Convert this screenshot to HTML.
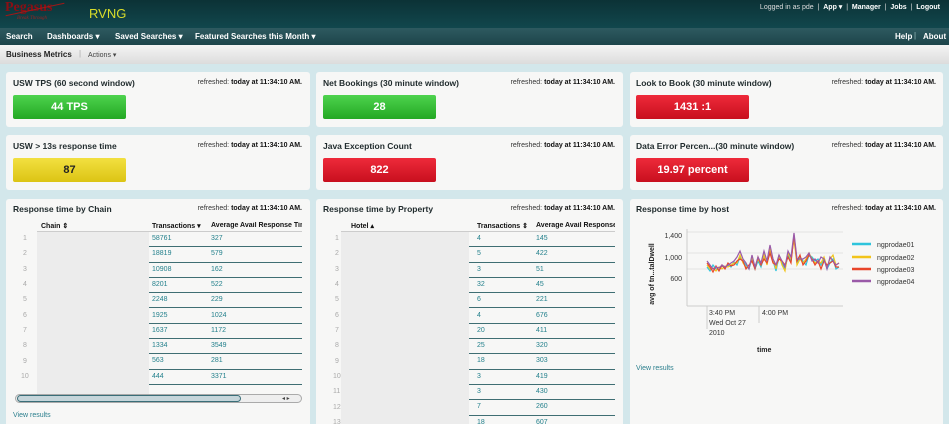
<!DOCTYPE html>
<html><head><meta charset="utf-8"><style>
*{margin:0;padding:0;box-sizing:border-box}
html,body{width:949px;height:424px;overflow:hidden}
body{background:#d3e7eb;font-family:"Liberation Sans",Arial,sans-serif;position:relative;color:#222}
.a{position:absolute}
.hdr{left:0;top:0;width:949px;height:28px;background:linear-gradient(#0c3236,#11474d)}
.nav{left:0;top:28px;width:949px;height:17px;background:linear-gradient(#2e5a60,#1c444a);color:#fff;font-size:8px;font-weight:bold;white-space:nowrap}
.sub{left:0;top:45px;width:949px;height:19px;background:linear-gradient(#f4f4f4,#dcdcdc)}
.p{position:absolute;background:#f7f7f6;border-radius:3px}
.t{position:absolute;font-size:8.5px;font-weight:bold;color:#1f2a2c;white-space:nowrap}
.r{position:absolute;font-size:7px;color:#333;text-align:right;white-space:nowrap}
.r b{color:#111}
.bd{position:absolute;width:113px;height:24px;border-radius:2px;color:#fff;font-weight:bold;font-size:11px;text-align:center;line-height:24px}
.g{background:linear-gradient(#4ed34e,#23a823);}
.rd{background:linear-gradient(#ee2a3a,#c80f1e)}
.y{background:linear-gradient(#f2e040,#dcc414);color:#222}
.tb{position:absolute;font-size:7px}
.h{position:absolute;font-weight:bold;color:#111;font-size:7px;white-space:nowrap}
.row{position:absolute;height:15.3px;border-bottom:1.5px solid #3f6e73;color:#23808c;line-height:14px;font-size:7px;white-space:nowrap}
.n{position:absolute;color:#aaa;font-size:7px}
.gray{position:absolute;background:#ececec}
.lk{position:absolute;color:#2b7f8d;font-size:7px}
</style></head><body>
<div class="a hdr"></div>
<div class="a" style="left:5px;top:0px;font-family:'Liberation Serif',serif;font-size:14px;font-weight:bold;color:#8a0f14;white-space:nowrap;line-height:16px">Pegasus</div>
<div class="a" style="left:5px;top:9px;width:60px;height:1px;background:#a01818;transform:rotate(-12deg)"></div>
<div class="a" style="left:17px;top:16px;font-family:'Liberation Serif',serif;font-size:5px;font-style:italic;color:#9a2222;white-space:nowrap">Break Through</div>
<div class="a" style="left:89px;top:6px;font-size:13px;color:#d9dd2a">RVNG</div>
<div class="a" style="right:9px;top:3px;font-size:7px;color:#ddd;white-space:nowrap">Logged in as pde &nbsp;| &nbsp;<b style="color:#fff">App ▾</b> &nbsp;| &nbsp;<b style="color:#fff">Manager</b> &nbsp;| &nbsp;<b style="color:#fff">Jobs</b> &nbsp;| &nbsp;<b style="color:#fff">Logout</b></div>
<div class="a nav"><span class="a" style="left:6px;top:4px">Search</span><span class="a" style="left:47px;top:4px">Dashboards ▾</span><span class="a" style="left:115px;top:4px">Saved Searches ▾</span><span class="a" style="left:195px;top:4px">Featured Searches this Month ▾</span><span class="a" style="left:895px;top:4px">Help</span><span class="a" style="left:914px;top:3px;font-weight:normal;color:#9bb">|</span><span class="a" style="left:923px;top:4px">About</span></div>
<div class="a sub"><span class="a" style="left:6px;top:5px;font-size:8px;font-weight:bold;white-space:nowrap">Business Metrics</span><span class="a" style="left:79px;top:4px;color:#aaa;font-size:8px">|</span><span class="a" style="left:88px;top:6px;font-size:7px;color:#444;white-space:nowrap">Actions ▾</span></div>

<div class="p" style="left:6px;top:72px;width:304px;height:55px"></div>
<div class="p" style="left:316px;top:72px;width:307px;height:55px"></div>
<div class="p" style="left:630px;top:72px;width:313px;height:55px"></div>
<div class="p" style="left:6px;top:135px;width:304px;height:55px"></div>
<div class="p" style="left:316px;top:135px;width:307px;height:55px"></div>
<div class="p" style="left:630px;top:135px;width:313px;height:55px"></div>
<div class="p" style="left:6px;top:199px;width:304px;height:230px"></div>
<div class="p" style="left:316px;top:199px;width:307px;height:230px"></div>
<div class="p" style="left:630px;top:199px;width:313px;height:230px"></div>

<div class="t" style="left:13px;top:78px">USW TPS (60 second window)</div>
<div class="t" style="left:323px;top:78px">Net Bookings (30 minute window)</div>
<div class="t" style="left:636px;top:78px">Look to Book (30 minute window)</div>
<div class="t" style="left:13px;top:141px">USW &gt; 13s response time</div>
<div class="t" style="left:323px;top:141px">Java Exception Count</div>
<div class="t" style="left:636px;top:141px">Data Error Percen...(30 minute window)</div>
<div class="t" style="left:13px;top:204px">Response time by Chain</div>
<div class="t" style="left:323px;top:204px">Response time by Property</div>
<div class="t" style="left:636px;top:204px">Response time by host</div>

<div class="r" style="left:150px;width:152px;top:79px">refreshed: <b>today at 11:34:10 AM.</b></div>
<div class="r" style="left:460px;width:155px;top:79px">refreshed: <b>today at 11:34:10 AM.</b></div>
<div class="r" style="left:780px;width:156px;top:79px">refreshed: <b>today at 11:34:10 AM.</b></div>
<div class="r" style="left:150px;width:152px;top:142px">refreshed: <b>today at 11:34:10 AM.</b></div>
<div class="r" style="left:460px;width:155px;top:142px">refreshed: <b>today at 11:34:10 AM.</b></div>
<div class="r" style="left:780px;width:156px;top:142px">refreshed: <b>today at 11:34:10 AM.</b></div>
<div class="r" style="left:150px;width:152px;top:205px">refreshed: <b>today at 11:34:10 AM.</b></div>
<div class="r" style="left:460px;width:155px;top:205px">refreshed: <b>today at 11:34:10 AM.</b></div>
<div class="r" style="left:780px;width:156px;top:205px">refreshed: <b>today at 11:34:10 AM.</b></div>

<div class="bd g" style="left:13px;top:95px">44 TPS</div>
<div class="bd g" style="left:323px;top:95px">28</div>
<div class="bd rd" style="left:636px;top:95px">1431 :1</div>
<div class="bd y" style="left:13px;top:158px">87</div>
<div class="bd rd" style="left:323px;top:158px">822</div>
<div class="bd rd" style="left:636px;top:158px">19.97 percent</div>

<span class="h" style="left:41px;top:222px">Chain ⇕</span>
<span class="h" style="left:152px;top:222px">Transactions ▾</span>
<span class="h" style="left:211px;top:222px;width:91px;overflow:hidden">Average Avail Response Time</span>
<div class="a" style="left:37px;top:231px;width:265px;border-top:1px solid #ccc"></div>
<div class="gray" style="left:37px;top:232px;width:112px;height:164px"></div>
<div class="a" style="left:15px;top:394px;width:287px;height:9px;border:1px solid #aaa;border-radius:5px;background:#eee"></div>
<div class="a" style="left:17px;top:395px;width:224px;height:7px;border:1.5px solid #3a6e78;border-radius:4px;background:#c5d5da"></div>
<div class="a" style="left:282px;top:395px;font-size:6px;color:#444;white-space:nowrap">◂ ▸</div>
<div class="lk" style="left:13px;top:412px">View results</div>

<span class="h" style="left:351px;top:222px">Hotel ▴</span>
<span class="h" style="left:477px;top:222px">Transactions ⇕</span>
<span class="h" style="left:536px;top:222px;width:79px;overflow:hidden">Average Avail Response</span>
<div class="a" style="left:341px;top:231px;width:274px;border-top:1px solid #ccc"></div>
<div class="gray" style="left:341px;top:232px;width:128px;height:200px"></div>

<svg class="a" style="left:630px;top:199px" width="313" height="225" font-family="Liberation Sans,sans-serif">
<g stroke="#ddd" stroke-width="0.7"><line x1="57" y1="33" x2="213" y2="33"/><line x1="57" y1="54" x2="213" y2="54"/><line x1="57" y1="70" x2="213" y2="70"/></g>
<line x1="57" y1="30" x2="57" y2="107" stroke="#ccc"/><line x1="57" y1="107" x2="213" y2="107" stroke="#ccc"/>
<line x1="77" y1="107" x2="77" y2="130" stroke="#ccc"/><line x1="129" y1="107" x2="129" y2="124" stroke="#ccc"/>
<g font-size="7" fill="#333" text-anchor="end"><text x="52" y="39">1,400</text><text x="52" y="61">1,000</text><text x="52" y="82">600</text></g>
<text transform="translate(24,75) rotate(-90)" font-size="7" font-weight="bold" text-anchor="middle" fill="#222">avg of tn...talDwell</text>
<g font-size="7" fill="#333"><text x="79" y="116">3:40 PM</text><text x="79" y="126">Wed Oct 27</text><text x="79" y="136">2010</text><text x="132" y="116">4:00 PM</text></g>
<text x="127" y="153" font-size="7" font-weight="bold" fill="#222">time</text>
<g fill="none" stroke-width="1.2">
<polyline stroke="#2ec4dc" points="77,68 80,72 83,66 86,70 89,71 92,67 95,69 98,66 101,68 104,63 107,66 110,58 113,62 116,66 119,70 122,60 125,70 128,62 131,68 134,58 137,64 140,52 143,62 146,72 149,58 152,64 155,70 158,56 161,62 164,37 167,64 170,58 173,62 176,66 179,56 182,58 185,62 188,60 191,66 194,60 197,70 200,64 203,60 206,70 209,68"/>
<polyline stroke="#f2c41a" points="77,66 80,70 83,69 86,72 89,68 92,70 95,67 98,68 101,66 104,64 107,64 110,56 113,64 116,68 119,69 122,58 125,68 128,60 131,66 134,56 137,66 140,50 143,60 146,70 149,56 152,66 155,72 158,54 161,60 164,40 167,66 170,60 173,64 176,60 179,54 182,60 185,64 188,62 191,64 194,58 197,68 200,60 203,56 206,66 209,64"/>
<polyline stroke="#e8452a" points="77,64 80,68 83,73 86,67 89,72 92,66 95,70 98,64 101,67 104,66 107,62 110,60 113,62 116,70 119,66 122,62 125,70 128,58 131,66 134,60 137,64 140,54 143,64 146,66 149,60 152,62 155,66 158,58 161,64 164,36 167,62 170,56 173,66 176,62 179,56 182,60 185,66 188,62 191,70 194,62 197,66 200,64 203,62 206,68 209,68"/>
<polyline stroke="#9a5aa8" points="77,62 80,66 83,70 86,68 89,69 92,66 95,68 98,66 101,64 104,62 107,58 110,52 113,60 116,64 119,70 122,56 125,68 128,58 131,64 134,52 137,62 140,46 143,60 146,66 149,56 152,62 155,68 158,52 161,58 164,34 167,60 170,60 173,60 176,58 179,54 182,62 185,60 188,64 191,58 194,60 197,70 200,58 203,62 206,66 209,64"/>
</g>
<g stroke-width="2.5"><line x1="222" y1="45" x2="241" y2="45" stroke="#2ec4dc"/><line x1="222" y1="58" x2="241" y2="58" stroke="#f2c41a"/><line x1="222" y1="70" x2="241" y2="70" stroke="#e8452a"/><line x1="222" y1="82" x2="241" y2="82" stroke="#9a5aa8"/></g>
<g font-size="7" fill="#333"><text x="247" y="48">ngprodae01</text><text x="247" y="61">ngprodae02</text><text x="247" y="73">ngprodae03</text><text x="247" y="85">ngprodae04</text></g>
</svg>
<div class="lk" style="left:636px;top:365px">View results</div>

<div class="n" style="left:23px;top:235px">1</div><div class="row" style="left:149px;top:232px;width:153px"><span style="margin-left:3px">58761</span><span class="a" style="left:62px">327</span></div>
<div class="n" style="left:23px;top:250px">2</div><div class="row" style="left:149px;top:247.3px;width:153px"><span style="margin-left:3px">18819</span><span class="a" style="left:62px">579</span></div>
<div class="n" style="left:23px;top:266px">3</div><div class="row" style="left:149px;top:262.6px;width:153px"><span style="margin-left:3px">10908</span><span class="a" style="left:62px">162</span></div>
<div class="n" style="left:23px;top:281px">4</div><div class="row" style="left:149px;top:277.9px;width:153px"><span style="margin-left:3px">8201</span><span class="a" style="left:62px">522</span></div>
<div class="n" style="left:23px;top:296px">5</div><div class="row" style="left:149px;top:293.2px;width:153px"><span style="margin-left:3px">2248</span><span class="a" style="left:62px">229</span></div>
<div class="n" style="left:23px;top:312px">6</div><div class="row" style="left:149px;top:308.5px;width:153px"><span style="margin-left:3px">1925</span><span class="a" style="left:62px">1024</span></div>
<div class="n" style="left:23px;top:327px">7</div><div class="row" style="left:149px;top:323.8px;width:153px"><span style="margin-left:3px">1637</span><span class="a" style="left:62px">1172</span></div>
<div class="n" style="left:23px;top:342px">8</div><div class="row" style="left:149px;top:339.1px;width:153px"><span style="margin-left:3px">1334</span><span class="a" style="left:62px">3549</span></div>
<div class="n" style="left:23px;top:358px">9</div><div class="row" style="left:149px;top:354.4px;width:153px"><span style="margin-left:3px">563</span><span class="a" style="left:62px">281</span></div>
<div class="n" style="left:21px;top:373px">10</div><div class="row" style="left:149px;top:369.7px;width:153px"><span style="margin-left:3px">444</span><span class="a" style="left:62px">3371</span></div>

<div class="n" style="left:335px;top:235px">1</div><div class="row" style="left:469px;top:232px;width:146px"><span style="margin-left:8px">4</span><span class="a" style="left:67px">145</span></div>
<div class="n" style="left:335px;top:250px">2</div><div class="row" style="left:469px;top:247.3px;width:146px"><span style="margin-left:8px">5</span><span class="a" style="left:67px">422</span></div>
<div class="n" style="left:335px;top:266px">3</div><div class="row" style="left:469px;top:262.6px;width:146px"><span style="margin-left:8px">3</span><span class="a" style="left:67px">51</span></div>
<div class="n" style="left:335px;top:281px">4</div><div class="row" style="left:469px;top:277.9px;width:146px"><span style="margin-left:8px">32</span><span class="a" style="left:67px">45</span></div>
<div class="n" style="left:335px;top:296px">5</div><div class="row" style="left:469px;top:293.2px;width:146px"><span style="margin-left:8px">6</span><span class="a" style="left:67px">221</span></div>
<div class="n" style="left:335px;top:312px">6</div><div class="row" style="left:469px;top:308.5px;width:146px"><span style="margin-left:8px">4</span><span class="a" style="left:67px">676</span></div>
<div class="n" style="left:335px;top:327px">7</div><div class="row" style="left:469px;top:323.8px;width:146px"><span style="margin-left:8px">20</span><span class="a" style="left:67px">411</span></div>
<div class="n" style="left:335px;top:342px">8</div><div class="row" style="left:469px;top:339.1px;width:146px"><span style="margin-left:8px">25</span><span class="a" style="left:67px">320</span></div>
<div class="n" style="left:335px;top:358px">9</div><div class="row" style="left:469px;top:354.4px;width:146px"><span style="margin-left:8px">18</span><span class="a" style="left:67px">303</span></div>
<div class="n" style="left:333px;top:373px">10</div><div class="row" style="left:469px;top:369.7px;width:146px"><span style="margin-left:8px">3</span><span class="a" style="left:67px">419</span></div>
<div class="n" style="left:333px;top:388px">11</div><div class="row" style="left:469px;top:385px;width:146px"><span style="margin-left:8px">3</span><span class="a" style="left:67px">430</span></div>
<div class="n" style="left:333px;top:404px">12</div><div class="row" style="left:469px;top:400.3px;width:146px"><span style="margin-left:8px">7</span><span class="a" style="left:67px">260</span></div>
<div class="n" style="left:333px;top:419px">13</div><div class="row" style="left:469px;top:415.6px;width:146px"><span style="margin-left:8px">18</span><span class="a" style="left:67px">607</span></div>
</body></html>
